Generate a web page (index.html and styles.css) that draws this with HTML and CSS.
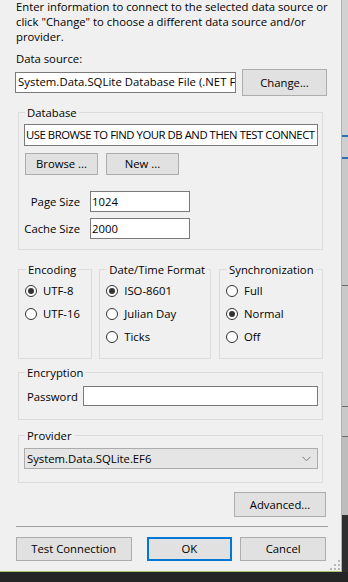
FILE: index.html
```html
<!DOCTYPE html>
<html>
<head>
<meta charset="utf-8">
<link rel="stylesheet" href="styles.css">
</head>
<body>
<div class="screen">
  <div class="top">
    <div class="dialog">
      <p class="intro">Enter information to connect to the selected data source or<br>click "Change" to choose a different data source and/or<br>provider.</p>
      <div class="ds-label">Data source:</div>
      <div class="ds-row">
        <div class="textbox ds-box">System.Data.SQLite Database File (.NET F</div>
        <button class="btn change">Change...</button>
      </div>

      <fieldset class="group db">
        <legend>Database</legend>
        <div class="textbox db-box">USE BROWSE TO FIND YOUR DB AND THEN TEST CONNECT</div>
        <div class="btn-row">
          <button class="btn small">Browse ...</button>
          <button class="btn small">New ...</button>
        </div>
        <div class="field-grid">
          <span class="flabel">Page Size</span><div class="textbox num">1024</div>
          <span class="flabel">Cache Size</span><div class="textbox num">2000</div>
        </div>
      </fieldset>

      <div class="options">
        <fieldset class="group opt enc">
          <legend>Encoding</legend>
          <div class="radio checked"><span class="dot"></span>UTF-8</div>
          <div class="radio"><span class="dot"></span>UTF-16</div>
        </fieldset>
        <fieldset class="group opt dt">
          <legend>Date/Time Format</legend>
          <div class="radio checked"><span class="dot"></span>ISO-8601</div>
          <div class="radio"><span class="dot"></span>Julian Day</div>
          <div class="radio"><span class="dot"></span>Ticks</div>
        </fieldset>
        <fieldset class="group opt sync">
          <legend>Synchronization</legend>
          <div class="radio"><span class="dot"></span>Full</div>
          <div class="radio checked"><span class="dot"></span>Normal</div>
          <div class="radio"><span class="dot"></span>Off</div>
        </fieldset>
      </div>

      <fieldset class="group encr">
        <legend>Encryption</legend>
        <div class="pw-row">
          <span class="pw-label">Password</span>
          <div class="textbox pw-box"></div>
        </div>
      </fieldset>

      <fieldset class="group prov">
        <legend>Provider</legend>
        <div class="combo">
          <span>System.Data.SQLite.EF6</span>
          <svg class="chev" width="9" height="6" viewBox="0 0 9 6"><path d="M0.5 0.8 L4.5 4.8 L8.5 0.8" fill="none" stroke="#7a7a7a" stroke-width="1"/></svg>
        </div>
      </fieldset>

      <div class="adv-row"><button class="btn adv">Advanced...</button></div>
      <div class="sep"></div>
      <div class="bottom-row">
        <button class="btn test">Test Connection</button>
        <button class="btn ok">OK</button>
        <button class="btn cancel">Cancel</button>
      </div>
      <svg class="grip" width="10" height="10" viewBox="0 0 10 10">
        <rect x="8" y="0" width="2" height="2" fill="#b8b8b8"/>
        <rect x="4" y="4" width="2" height="2" fill="#b8b8b8"/>
        <rect x="8" y="4" width="2" height="2" fill="#b8b8b8"/>
        <rect x="0" y="8" width="2" height="2" fill="#b8b8b8"/>
        <rect x="4" y="8" width="2" height="2" fill="#b8b8b8"/>
        <rect x="8" y="8" width="2" height="2" fill="#b8b8b8"/>
      </svg>
    </div>
    <div class="backdrop">
      <div class="bd-a"></div>
      <div class="bd-blue"></div>
      <div class="bd-b"></div>
      <div class="bd-blue"></div>
      <div class="bd-c"></div>
      <div class="bd-line"></div>
      <div class="bd-d"></div>
      <div class="bd-line"></div>
      <div class="bd-e"></div>
      <div class="bd-line"></div>
      <div class="bd-f"></div>
      <div class="bd-dark"></div>
    </div>
  </div>
  <div class="taskbar"></div>
</div>
</body>
</html>
```
FILE: styles.css
```css
* { box-sizing: border-box; }
html, body { margin: 0; padding: 0; }
body {
  width: 348px;
  height: 582px;
  overflow: hidden;
  font-family: "Open Sans", "Noto Sans", sans-serif;
  font-size: 11.3px;
  color: #000;
  background: #2a2a2a;
}
.screen { display: flex; flex-direction: column; width: 348px; height: 582px; }
.top { display: flex; height: 572px; }
.dialog {
  position: relative;
  width: 342px;
  height: 572px;
  background: #f0f0f0;
  border-right: 1px solid #a9c46c;
  border-bottom: 1px solid #a9c46c;
  padding: 0 15px 0 15px;
  display: flex;
  flex-direction: column;
}
.intro { margin: -1px 0 0 1px; line-height: 15px; white-space: nowrap; }
.ds-label { margin: 7px 0 0 1px; line-height: 15px; }
.ds-row { display: flex; align-items: center; justify-content: space-between; margin-top: 3px; height: 27px; }
.textbox {
  background: #fff;
  border: 1px solid #7a7a7a;
  line-height: 18px;
  padding: 0 2px;
  white-space: nowrap;
  overflow: hidden;
}
.ds-box { width: 221px; height: 21px; padding-left: 2px; letter-spacing: 0.05px; }
.btn {
  font: inherit;
  color: #000;
  background: #e1e1e1;
  border: 1px solid #adadad;
  border-radius: 0;
  padding: 0;
  margin: 0;
  line-height: 18px;
}
.change { width: 85px; height: 27px; margin-right: -1px; }

.group {
  margin: 0 3px 0 3px;
  padding: 0 4px 0 5px;
  border: 1px solid #dcdcdc;
  min-width: 0;
}
.group legend { padding: 0 2px; margin-left: 1px; line-height: 15px; }

.db { margin-top: 9px; padding-bottom: 10px; }
.db-box { margin-top: 4px; height: 22px; line-height: 20px; padding-left: 1px; letter-spacing: -0.45px; }
.btn-row { display: flex; gap: 8px; margin-top: 7px; padding-left: 1px; }
.small { width: 73px; height: 22px; }
.field-grid {
  display: grid;
  grid-template-columns: 56px 100px;
  column-gap: 10px;
  row-gap: 6px;
  align-items: center;
  margin-top: 16px;
}
.flabel { text-align: right; }
.num { height: 21px; line-height: 19px; padding-left: 1px; }

.options { display: flex; margin: 12px 3px 0 3px; gap: 7px; }
.opt { margin: 0; height: 97px; padding: 2px 0 0 6px; }
.enc { width: 75px; }
.dt { width: 113px; }
.sync { width: 105px; margin-left: 1px; }
.radio { display: flex; align-items: center; height: 23px; white-space: nowrap; }
.dot {
  width: 12px; height: 12px;
  border: 1px solid #333;
  border-radius: 50%;
  background: #fff;
  margin-right: 6px;
  flex: none;
  display: flex; align-items: center; justify-content: center;
}
.checked .dot::after {
  content: "";
  width: 6px; height: 6px;
  border-radius: 50%;
  background: #333;
}

.encr { margin-top: 6px; padding-bottom: 13px; }
.pw-row { display: flex; align-items: center; margin-top: 6px; padding-left: 3px; }
.pw-label { width: 56px; }
.pw-box { width: 236px; height: 20px; }

.prov { margin-top: 8px; padding-bottom: 13px; }
.combo {
  margin-top: 5px;
  height: 21px;
  background: #e5e5e5;
  border: 1px solid #acacac;
  display: flex; align-items: center; justify-content: space-between;
  padding: 0 6px 0 2px;
}
.chev { display: block; }

.adv-row { display: flex; justify-content: flex-end; margin-top: 9px; }
.adv { width: 92px; height: 25px; }
.sep { height: 1px; background: #a0a0a0; margin: 9px -2px 0 1px; }
.bottom-row { display: flex; margin-top: 10px; }
.test { width: 116px; height: 24px; margin-left: 1px; }
.ok { width: 86px; height: 24px; margin-left: 15px; border: 2px solid #0078d7; }
.cancel { width: 86px; height: 24px; margin-left: 8px; }
.grip { position: absolute; right: 1px; bottom: 1px; }

.backdrop { flex: 1; display: flex; flex-direction: column; background: #c9c9c9; }
.bd-a { height: 135px; background: #d2d2d2; }
.bd-blue { height: 2px; background: #2f6fb5; }
.bd-b { height: 20px; background: #cfcfcf; }
.bd-c { height: 126px; }
.bd-line { height: 1px; background: #6a6a6a; }
.bd-d { height: 120px; }
.bd-e { height: 29px; }
.bd-f { height: 78px; background: #bdbdbd; }
.bd-dark { flex: 1; background: #2e2e2e; }
.taskbar { height: 10px; background: #252525; }
```
